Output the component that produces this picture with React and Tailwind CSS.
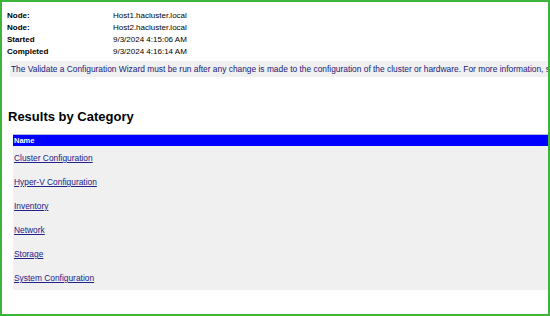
import React from 'react';

const info = [
  ['Node:', 'Host1.hacluster.local'],
  ['Node:', 'Host2.hacluster.local'],
  ['Started', '9/3/2024 4:15:06 AM'],
  ['Completed', '9/3/2024 4:16:14 AM'],
];

const categories = [
  'Cluster Configuration',
  'Hyper-V Configuration',
  'Inventory',
  'Network',
  'Storage',
  'System Configuration',
];

export default function App() {
  return (
    <div className="w-[550px] h-[316px] border-2 border-[#3fb43a] bg-white overflow-hidden font-['Liberation_Sans',Arial,sans-serif] text-black">
      <div className="pt-[8px]">
        <table className="ml-[5px] border-collapse text-[8px]">
          <tbody>
            {info.map(([k, v], i) => (
              <tr key={i} className="h-[12px]">
                <td className="w-[106px] p-0 font-bold leading-[12px]">{k}</td>
                <td className="p-0 leading-[12px]">{v}</td>
              </tr>
            ))}
          </tbody>
        </table>

        <div className="ml-[8px] mt-[3px] h-[16px] bg-[#f0f0f0] pl-[1px] text-[8.4px] leading-[16px] text-[#20207a] whitespace-nowrap">
          The Validate a Configuration Wizard must be run after any change is made to the configuration of the cluster or hardware. For more information, see
        </div>

        <h2 className="ml-[6px] mt-[32px] text-[13px] font-bold leading-[16px]">Results by Category</h2>

        <div className="ml-[11px] mt-[9px]">
          <div className="h-[12px] border-t border-[#b8b8d8] bg-[#0000ff] pl-[1px] text-[7.5px] font-bold leading-[11px] text-white">
            Name
          </div>
          <div className="bg-[#f0f0f0]">
            {categories.map((c) => (
              <div key={c} className="h-[24px] pl-[1px] text-[8.4px] leading-[24px]">
                <a href="#" className="text-[#22228a] underline">{c}</a>
              </div>
            ))}
          </div>
        </div>
      </div>
    </div>
  );
}
